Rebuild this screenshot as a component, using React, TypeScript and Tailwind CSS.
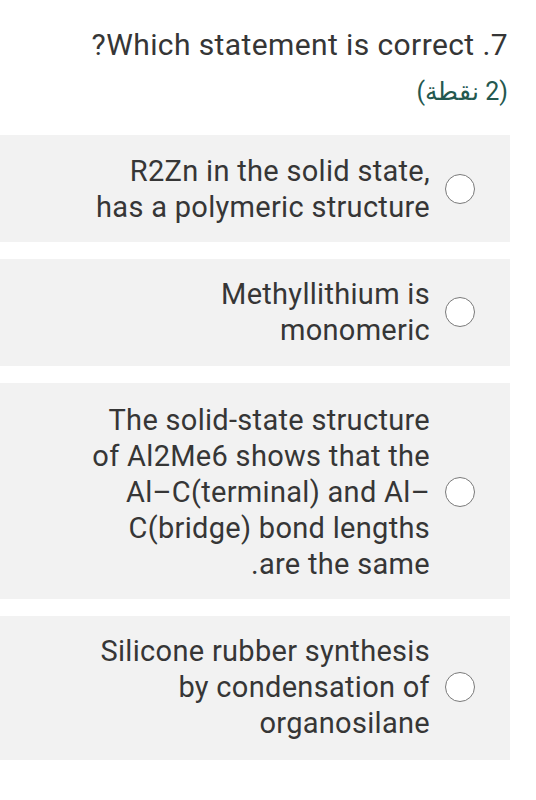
import React from "react";

type Option = { lines: string[]; pt: string; pb: string };

const options: Option[] = [
  { lines: ["R2Zn in the solid state,", "has a polymeric structure"], pt: "pt-[18px]", pb: "pb-[17px]" },
  { lines: ["Methyllithium is", "monomeric"], pt: "pt-[17px]", pb: "pb-[18px]" },
  {
    lines: [
      "The solid-state structure",
      "of Al2Me6 shows that the",
      "Al–C(terminal) and Al–",
      "C(bridge) bond lengths",
      ".are the same",
    ],
    pt: "pt-[19px]",
    pb: "pb-[17px]",
  },
  {
    lines: ["Silicone rubber synthesis", "by condensation of", "organosilane"],
    pt: "pt-[17px]",
    pb: "pb-[19px]",
  },
];

function Radio() {
  return <span className="block h-[30px] w-[30px] shrink-0 rounded-full border-[1.5px] border-[#7a7a7a] bg-white" />;
}

export default function App() {
  return (
    <div className="min-h-[800px] bg-white font-['Roboto',sans-serif] text-[#363636]">
      {/* Question header */}
      <div className="pr-[28px] pt-[27px] text-right">
        <p className="text-[30px] leading-[36px] tracking-[0.4px]">?Which statement is correct .7</p>
        <p dir="rtl" className="mt-[11px] text-right text-[25px] leading-[36px] text-[#24584f]">
          (2 نقطة)
        </p>
      </div>

      {/* Options */}
      <div className="mr-[26px] mt-[25px] flex flex-col gap-[17px]">
        {options.map((o, i) => (
          <div key={i} className={`flex items-center justify-end gap-[15px] bg-[#f2f2f2] pr-[35px] ${o.pt} ${o.pb}`}>
            <div className="text-right text-[29px] leading-[36px] tracking-[0.3px]">
              {o.lines.map((l, j) => (
                <span key={j} className="block whitespace-nowrap">
                  {l}
                </span>
              ))}
            </div>
            <Radio />
          </div>
        ))}
      </div>
    </div>
  );
}
